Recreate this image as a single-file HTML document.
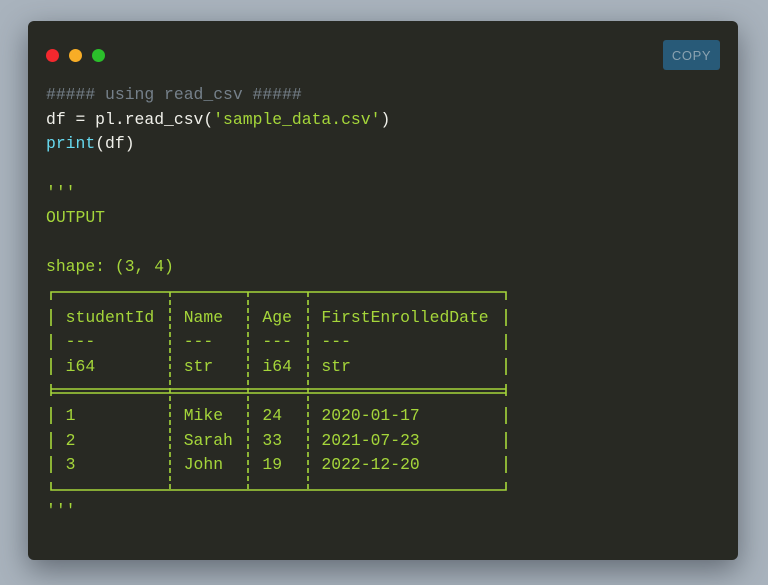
<!DOCTYPE html>
<html><head><style>
html,body{margin:0;padding:0}
body{width:768px;height:585px;background:#a9b3bd;position:relative;overflow:hidden;font-family:"Liberation Mono","DejaVu Sans Mono",monospace}
.win{position:absolute;left:28px;top:21px;width:710px;height:539px;background:#282923;border-radius:6px;box-shadow:0 10px 30px rgba(40,45,55,0.55)}
.dot{position:absolute;top:28px;width:13px;height:13px;border-radius:50%}
.copy{position:absolute;left:635px;top:19px;width:57px;height:30px;background:#285a78;border-radius:3px;color:#8aa2b0;font-family:"Liberation Sans",sans-serif;font-size:13px;letter-spacing:0.6px;display:flex;align-items:center;justify-content:center}
.l{position:absolute;left:18px;font-size:16.4px;line-height:24px;white-space:pre;margin:0;color:#f0f0ea}
.c{color:#75808a}.s{color:#a5d63a}.b{color:#66d9ef}.g{color:#a5d63a}
svg{position:absolute;left:0;top:0}
</style></head><body>
<div class="win">
<div class="dot" style="left:18px;background:#f3282e"></div>
<div class="dot" style="left:41px;background:#f8ad26"></div>
<div class="dot" style="left:64px;background:#2bbf2b"></div>
<div class="copy">COPY</div>
<div class="l c" style="top:62px">##### using read_csv #####</div>
<div class="l" style="top:87px">df = pl.read_csv(<span class="s">'sample_data.csv'</span>)</div>
<div class="l" style="top:111px"><span class="b">print</span>(df)</div>
<div class="l g" style="top:160px">'''</div>
<div class="l g" style="top:185px">OUTPUT</div>
<div class="l g" style="top:234px">shape: (3, 4)</div>
<div class="l g" style="top:285px">  studentId   Name    Age   FirstEnrolledDate</div>
<div class="l g" style="top:309px">  ---         ---     ---   ---</div>
<div class="l g" style="top:334px">  i64         str     i64   str</div>
<div class="l g" style="top:383px">  1           Mike    24    2020-01-17</div>
<div class="l g" style="top:408px">  2           Sarah   33    2021-07-23</div>
<div class="l g" style="top:432px">  3           John    19    2022-12-20</div>
<div class="l g" style="top:478px">'''</div>
</div>
<svg width="768" height="585" stroke="#a5d63a" stroke-width="1.6" fill="none">
<path d="M51 300V292H506V300M51 482V490H506V482"/>
<path d="M51 384V396M51 389H506M51 393H506M506 384V396"/>
<g stroke-dasharray="5 3">
<path d="M170 292V490M248 292V490M308 292V490"/>
</g>
<path d="M51 309V326M51 334V350M51 358V375M51 407V424M51 432V449M51 456V473"/>
<path d="M506 309V326M506 334V350M506 358V375M506 407V424M506 432V449M506 456V473"/>
</svg>
</body></html>
